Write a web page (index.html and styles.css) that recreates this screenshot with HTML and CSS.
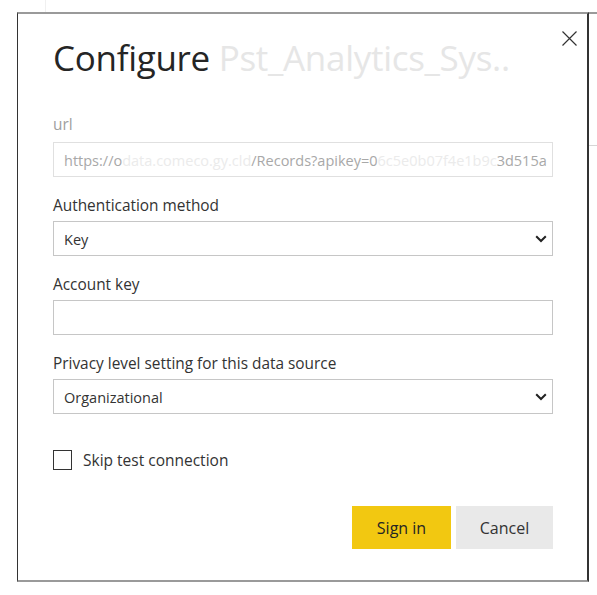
FILE: index.html
```html
<!DOCTYPE html>
<html lang="en">
<head>
<meta charset="utf-8">
<title>Configure data source</title>
<link rel="stylesheet" href="styles.css">
</head>
<body>
<div class="dialog" role="dialog" aria-labelledby="dlg-title">
  <button class="close" aria-label="Close">
    <svg width="15" height="15" viewBox="0 0 15 15"><path d="M0.5 0.5 L14.5 14.5 M14.5 0.5 L0.5 14.5" stroke="#333" stroke-width="1.2" fill="none"/></svg>
  </button>
  <h1 id="dlg-title" class="title">Configure <span class="masked">Pst_Analytics_Sys..</span></h1>

  <div class="field field-first">
    <label class="label label-muted">url</label>
    <div class="input input-disabled">https://o<span class="masked">data.comeco.gy.cld</span>/Records?apikey=0<span class="masked">6c5e0b07f4e1b9c</span>3d515a</div>
  </div>

  <div class="field">
    <label class="label">Authentication method</label>
    <div class="input select">
      <span>Key</span>
      <svg class="chev" width="12" height="8" viewBox="0 0 12 8"><path d="M1.2 1.2 L6 6 L10.8 1.2" stroke="#222" stroke-width="2" fill="none"/></svg>
    </div>
  </div>

  <div class="field">
    <label class="label">Account key</label>
    <div class="input"></div>
  </div>

  <div class="field">
    <label class="label">Privacy level setting for this data source</label>
    <div class="input select">
      <span>Organizational</span>
      <svg class="chev" width="12" height="8" viewBox="0 0 12 8"><path d="M1.2 1.2 L6 6 L10.8 1.2" stroke="#222" stroke-width="2" fill="none"/></svg>
    </div>
  </div>

  <label class="check">
    <span class="box"></span>
    <span>Skip test connection</span>
  </label>

  <div class="actions">
    <button class="btn btn-primary">Sign in</button>
    <button class="btn btn-secondary">Cancel</button>
  </div>
</div>
</body>
</html>
```

FILE: styles.css
```css
html {
  background:
    linear-gradient(#f0f0f0, #f0f0f0) 45px 0 / 1px 12px no-repeat,
    linear-gradient(#9a9a9a, #9a9a9a) 17px 12px / 580px 2px no-repeat,
    linear-gradient(#d6d6d6, #d6d6d6) 588px 145px / 9px 1px no-repeat,
    #fff;
}

body {
  margin: 0;
  padding: 12px 0 0 17px;
  font-family: "Open Sans", "Noto Sans", sans-serif;
  color: #333;
}

.dialog {
  position: relative;
  box-sizing: border-box;
  width: 572px;
  height: 570px;
  border-left: 1px solid #333;
  border-right: 2px solid #333;
  border-top: 2px solid #9a9a9a;
  border-bottom: 2px solid #9a9a9a;
  background: #fff;
  padding: 0 34px 0 35px;
}

.close {
  position: absolute;
  top: 17px;
  right: 10px;
  width: 15px;
  height: 15px;
  padding: 0;
  border: 0;
  background: none;
  display: flex;
}

.title {
  margin: 20px 0 0;
  font-size: 35px;
  font-weight: 400;
  line-height: 48px;
  color: #252525;
  white-space: nowrap;
  letter-spacing: -0.3px;
}

.masked {
  color: #e6e6e6;
}

.field {
  margin-top: 19px;
}

.field-first {
  margin-top: 33px;
}

.label {
  display: block;
  font-size: 15.4px;
  line-height: 20px;
  color: #333;
}

.label-muted {
  color: #a0a0a0;
}

.input {
  box-sizing: border-box;
  margin-top: 5px;
  height: 35px;
  border: 1px solid #c6c6c6;
  display: flex;
  align-items: center;
  padding: 1px 10px 0;
  font-size: 14.5px;
  color: #333;
  white-space: nowrap;
  overflow: hidden;
}

.input-disabled {
  border-color: #e0e0e0;
  color: #a8a8a8;
  margin-top: 7px;
  padding-right: 0;
}

.input-disabled .masked {
  color: #ebebeb;
}

.select {
  justify-content: space-between;
  padding-right: 5px;
}

.check {
  display: flex;
  align-items: center;
  gap: 11px;
  margin-top: 35px;
  font-size: 15.5px;
  color: #333;
}

.box {
  box-sizing: border-box;
  width: 19px;
  height: 20px;
  border: 1px solid #333;
}

.actions {
  display: flex;
  justify-content: flex-end;
  gap: 5px;
  margin-top: 35px;
}

.btn {
  height: 43px;
  border: 0;
  font-family: inherit;
  font-size: 16px;
  color: #252525;
}

.btn-primary {
  width: 99px;
  background: #f2c811;
}

.btn-secondary {
  width: 97px;
  background: #e9e9e9;
  color: #333;
}
```
